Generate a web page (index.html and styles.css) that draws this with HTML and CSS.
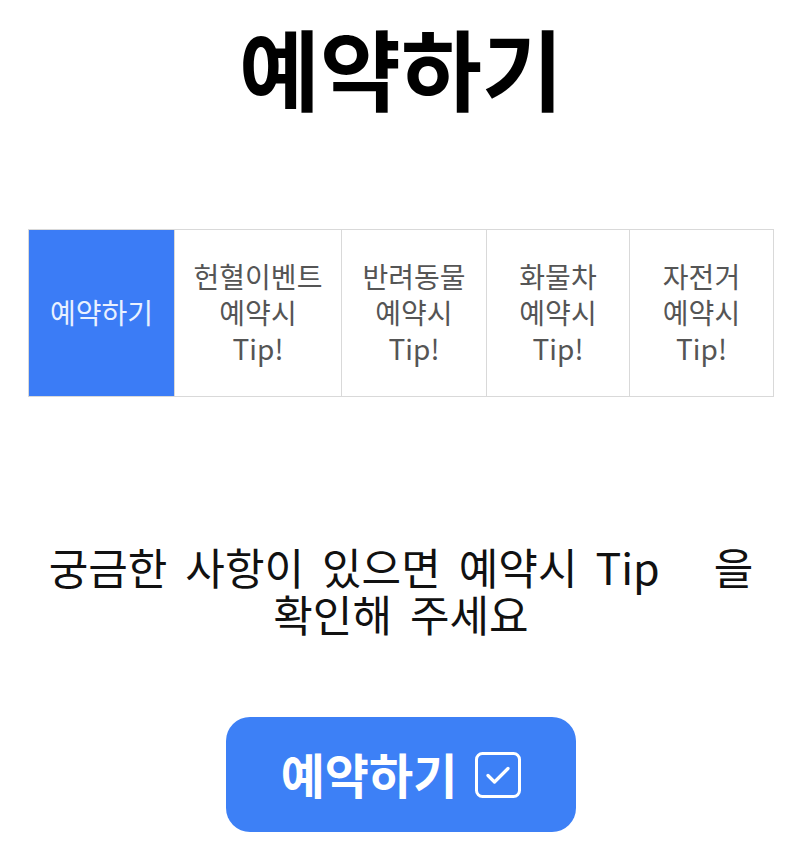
FILE: index.html
```html
<!DOCTYPE html>
<html lang="ko">
<head>
<meta charset="utf-8">
<title>예약하기</title>
<link rel="stylesheet" href="styles.css">
</head>
<body>
<main class="page">
  <h1 class="title">예약하기</h1>
  <nav class="tabs">
    <div class="tab active">예약하기</div>
    <div class="tab">헌혈이벤트<br>예약시<br>Tip!</div>
    <div class="tab">반려동물<br>예약시<br>Tip!</div>
    <div class="tab">화물차<br>예약시<br>Tip!</div>
    <div class="tab">자전거<br>예약시<br>Tip!</div>
  </nav>
  <p class="notice">궁금한 사항이 있으면 예약시 Tip <span class="particle">을</span><br>확인해 주세요</p>
  <div class="actions">
    <button class="reserve">
      <span>예약하기</span>
      <svg class="check" width="46" height="46" viewBox="0 0 46 46" aria-hidden="true">
        <rect x="1.5" y="1.5" width="43" height="43" rx="6" fill="none" stroke="#fff" stroke-width="3"/>
        <path d="M13 23.5 L19.5 30 L33 16.5" fill="none" stroke="#fff" stroke-width="3.2" stroke-linecap="round" stroke-linejoin="round"/>
      </svg>
    </button>
  </div>
</main>
</body>
</html>
```

FILE: styles.css
```css
* { box-sizing: border-box; }
html, body { margin: 0; padding: 0; background: #fff; }
body {
  font-family: "Noto Sans CJK KR", "Noto Sans", sans-serif;
  color: #000;
}
.page {
  width: 800px;
  display: flex;
  flex-direction: column;
  align-items: center;
}
.title {
  margin: 2px 0 0 2px;
  font-size: 88px;
  line-height: 128px;
  font-weight: 700;
  letter-spacing: 0;
}
.tabs {
  margin-top: 99px;
  margin-left: 2px;
  display: grid;
  grid-template-columns: 145px 167px 145px 143px 144px;
  border: 1px solid #d9d9d9;
}
.tab {
  height: 166px;
  display: flex;
  align-items: center;
  justify-content: center;
  text-align: center;
  font-size: 28px;
  line-height: 36px;
  color: #555;
  border-left: 1px solid #d9d9d9;
  padding-bottom: 2px;
}
.tab:first-child { border-left: none; }
.tab.active {
  background: #3b7cf6;
  color: #e9f1ff;
}
.notice {
  margin: 146px 0 0 2px;
  font-size: 43px;
  line-height: 47px;
  word-spacing: 6px;
  text-align: center;
  color: #111;
}
.particle { margin-left: 36px; }
.actions {
  margin-top: 80px;
  margin-left: 2px;
}
.reserve {
  width: 350px;
  height: 115px;
  border: none;
  border-radius: 24px;
  background: #3d80f6;
  color: #fff;
  font-family: "Noto Sans CJK KR", "Noto Sans", sans-serif;
  font-size: 48px;
  font-weight: 700;
  display: flex;
  align-items: center;
  justify-content: center;
  gap: 18px;
  padding: 0 0 4px 0;
}
.check { display: block; margin-top: 4px; }
```
